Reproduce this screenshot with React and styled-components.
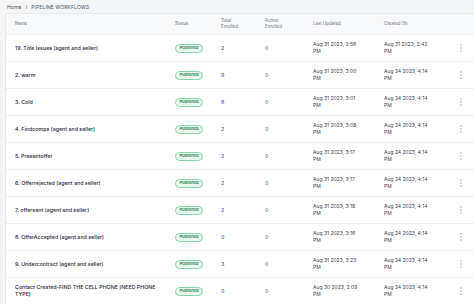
import React from 'react';
import styled, { createGlobalStyle } from 'styled-components';

const GlobalStyle = createGlobalStyle`
  body {
    margin: 0;
    background: #f4f5f7;
    font-family: Inter, "Noto Sans", sans-serif;
  }
`;

const Page = styled.div`
  width: 474px;
  height: 304px;
  overflow: hidden;
  padding-left: 5px;
  box-sizing: border-box;
`;

const Breadcrumb = styled.div`
  height: 13px;
  display: flex;
  align-items: center;
  gap: 4px;
  padding-left: 2px;
  font-size: 5px;
  color: #4b5563;
  letter-spacing: 0.1px;
`;

const Card = styled.div`
  background: #fff;
  border: 1px solid #e6e8eb;
  border-right: none;
  border-radius: 3px 0 0 3px;
`;

const Row = styled.div`
  display: grid;
  grid-template-columns: 160px 46px 44px 48px 71px 70px 1fr;
  align-items: center;
  padding-left: 9px;
  height: ${p => (p.$head ? '21px' : '27px')};
  background: ${p => (p.$head ? '#f8f9fa' : '#fff')};
  border-bottom: 1px solid #eceef1;
  box-sizing: border-box;
`;

const HeadCell = styled.div`
  font-size: 4.4px;
  line-height: 6px;
  color: #6b7280;
`;

const NameCell = styled.div`
  font-size: 5.3px;
  line-height: 7px;
  font-weight: 500;
  color: #1f2937;
  max-width: 150px;
`;

const StatusCell = styled.div`
  display: flex;
  align-items: center;
`;

const Badge = styled.span`
  display: inline-flex;
  align-items: center;
  justify-content: center;
  width: 28px;
  height: 9px;
  box-sizing: border-box;
  border: 0.8px solid #86d8a8;
  background: #e9f8ef;
  color: #23804f;
  border-radius: 5px;
  font-size: 4px;
  line-height: 1;
  font-weight: 600;
`;

const Num = styled.div`
  font-size: 5.2px;
  font-weight: 500;
  color: ${p => (p.$muted ? '#4d7f9c' : '#2f6db5')};
`;

const DateCell = styled.div`
  font-size: 5px;
  line-height: 7px;
  color: #374151;
  max-width: 47px;
`;

const Kebab = styled.div`
  display: flex;
  padding-left: 6px;
`;

const Dots = () => (
  <svg width="2" height="8" viewBox="0 0 2 8">
    <circle cx="1" cy="1" r="0.7" fill="#8b929c" />
    <circle cx="1" cy="4" r="0.7" fill="#8b929c" />
    <circle cx="1" cy="7" r="0.7" fill="#8b929c" />
  </svg>
);

const rows = [
  ['19. Title Issues (agent and seller)', 2, 'Aug 31 2023, 2:56 PM', 'Aug 31 2023, 2:42 PM'],
  ['2. warm', 9, 'Aug 31 2023, 3:00 PM', 'Aug 24 2023, 4:14 PM'],
  ['3. Cold', 8, 'Aug 31 2023, 3:01 PM', 'Aug 24 2023, 4:14 PM'],
  ['4. Findcomps (agent and seller)', 2, 'Aug 31 2023, 3:08 PM', 'Aug 24 2023, 4:14 PM'],
  ['5. Presentoffer', 2, 'Aug 31 2023, 3:17 PM', 'Aug 24 2023, 4:14 PM'],
  ['6. Offerrejected (agent and seller)', 2, 'Aug 31 2023, 3:17 PM', 'Aug 24 2023, 4:14 PM'],
  ['7. offersent (agent and seller)', 2, 'Aug 31 2023, 3:18 PM', 'Aug 24 2023, 4:14 PM'],
  ['8. OfferAccepted (agent and seller)', 0, 'Aug 31 2023, 3:16 PM', 'Aug 24 2023, 4:14 PM'],
  ['9. Undercontract (agent and seller)', 3, 'Aug 31 2023, 3:23 PM', 'Aug 24 2023, 4:14 PM'],
  ['Contact Created-FIND THE CELL PHONE (NEED PHONE TYPE)', 0, 'Aug 30 2023, 2:09 PM', 'Aug 24 2023, 4:14 PM'],
];

export default function App() {
  return (
    <Page>
      <GlobalStyle />
      <Breadcrumb>
        <span>Home</span>
        <span>/</span>
        <span>PIPELINE WORKFLOWS</span>
      </Breadcrumb>
      <Card>
        <Row $head>
          <HeadCell>Name</HeadCell>
          <HeadCell>Status</HeadCell>
          <HeadCell>Total<br />Enrolled</HeadCell>
          <HeadCell>Active<br />Enrolled</HeadCell>
          <HeadCell>Last Updated</HeadCell>
          <HeadCell>Created On</HeadCell>
          <HeadCell />
        </Row>
        {rows.map(([name, total, updated, created]) => (
          <Row key={name}>
            <NameCell>{name}</NameCell>
            <StatusCell><Badge>Published</Badge></StatusCell>
            <Num>{total}</Num>
            <Num $muted>0</Num>
            <DateCell>{updated}</DateCell>
            <DateCell>{created}</DateCell>
            <Kebab><Dots /></Kebab>
          </Row>
        ))}
      </Card>
    </Page>
  );
}
